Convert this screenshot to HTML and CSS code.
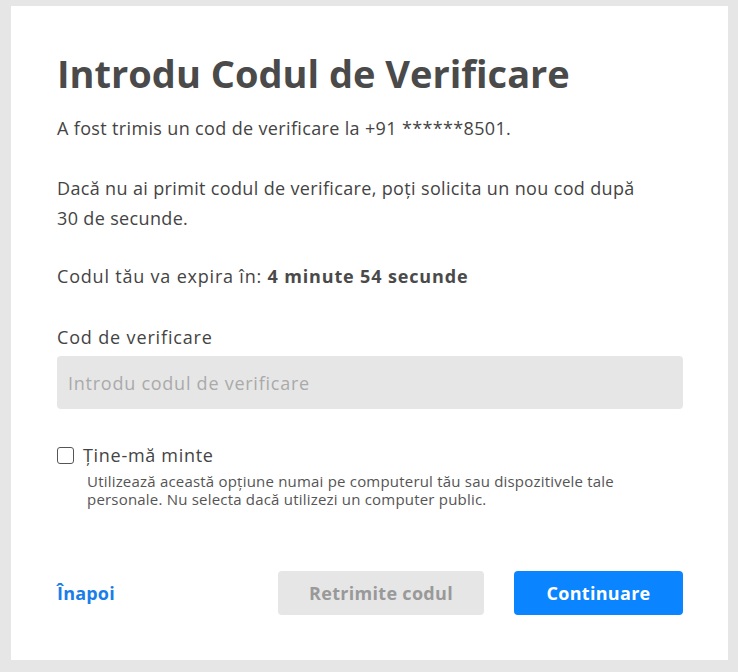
FILE: index.html
```html
<!DOCTYPE html>
<html lang="ro">
<head>
<meta charset="utf-8">
<title>Introdu Codul de Verificare</title>
<link rel="stylesheet" href="styles.css">
</head>
<body>
<main class="card">
  <h1 class="title">Introdu Codul de Verificare</h1>
  <p class="text sent">A fost trimis un cod de verificare la +91 ******8501.</p>
  <p class="text info">Dacă nu ai primit codul de verificare, poți solicita un nou cod după 30 de secunde.</p>
  <p class="text expire">Codul tău va expira în: <strong>4 minute 54 secunde</strong></p>
  <form class="form">
    <label class="label" for="code">Cod de verificare</label>
    <input class="input" id="code" type="text" placeholder="Introdu codul de verificare">
    <div class="remember">
      <input class="check" id="remember" type="checkbox">
      <div class="remember-body">
        <label class="remember-label" for="remember">Ține-mă minte</label>
        <p class="hint">Utilizează această opțiune numai pe computerul tău sau dispozitivele tale personale. Nu selecta dacă utilizezi un computer public.</p>
      </div>
    </div>
    <div class="actions">
      <a class="back" href="#">Înapoi</a>
      <div class="buttons">
        <button class="btn btn-resend" type="button" disabled>Retrimite codul</button>
        <button class="btn btn-primary" type="submit">Continuare</button>
      </div>
    </div>
  </form>
</main>
</body>
</html>
```
FILE: styles.css
```css
* { box-sizing: border-box; }
html, body { margin: 0; }
body {
  background: #e6e6e6;
  font-family: "Open Sans", "Liberation Sans", sans-serif;
  color: #444;
  padding: 6px 10px 12px 11px;
}
.card {
  background: #fff;
  height: 654px;
  padding: 44px 45px 45px 46px;
  display: flex;
  flex-direction: column;
}
.title {
  margin: 0;
  font-size: 38px;
  line-height: 46px;
  font-weight: 700;
  color: #4a4a4a;
}
.text {
  margin: 0;
  font-size: 18px;
  letter-spacing: 0.35px;
  line-height: 30px;
  color: #444;
  max-width: 585px;
}
.sent { margin-top: 17px; }
.info { margin-top: 30px; }
.expire { margin-top: 28px; letter-spacing: 0.8px; }
.expire strong { font-weight: 700; color: #4a4a4a; letter-spacing: 0.85px; }
.form { display: flex; flex-direction: column; flex: 1; }
.label {
  margin-top: 34px;
  font-size: 18px;
  letter-spacing: 0.85px;
  line-height: 24px;
  color: #444;
}
.input {
  margin-top: 7px;
  height: 53px;
  border: none;
  border-radius: 4px;
  background: #e6e6e6;
  padding: 0 11px;
  font-family: inherit;
  font-size: 18px;
  letter-spacing: 0.75px;
  color: #444;
}
.input::placeholder { color: #aaa; }
.remember {
  margin-top: 35px;
  display: flex;
  gap: 9px;
}
.check {
  appearance: none;
  margin: 3px 0 0;
  width: 17px;
  height: 17px;
  border: 1.5px solid #555;
  border-radius: 3px;
  background: #fff;
  flex: none;
}
.remember-label {
  display: block;
  font-size: 18px;
  letter-spacing: 0.7px;
  line-height: 22px;
  color: #444;
}
.hint {
  margin: 6px 0 0 4px;
  font-size: 15px;
  letter-spacing: 0.2px;
  line-height: 18px;
  color: #555;
  max-width: 560px;
}
.actions {
  margin-top: auto;
  display: flex;
  justify-content: space-between;
  align-items: center;
}
.back {
  color: #1a7de8;
  font-weight: 700;
  font-size: 18px;
  letter-spacing: 0.2px;
  text-decoration: none;
}
.buttons { display: flex; gap: 30px; }
.btn {
  height: 44px;
  border: none;
  border-radius: 4px;
  font-family: inherit;
  font-size: 18px;
  letter-spacing: 0.3px;
  font-weight: 700;
}
.btn-resend {
  width: 206px;
  background: #e6e6e6;
  color: #999;
}
.btn-primary {
  width: 169px;
  background: #0a84ff;
  color: #fff;
}
```
